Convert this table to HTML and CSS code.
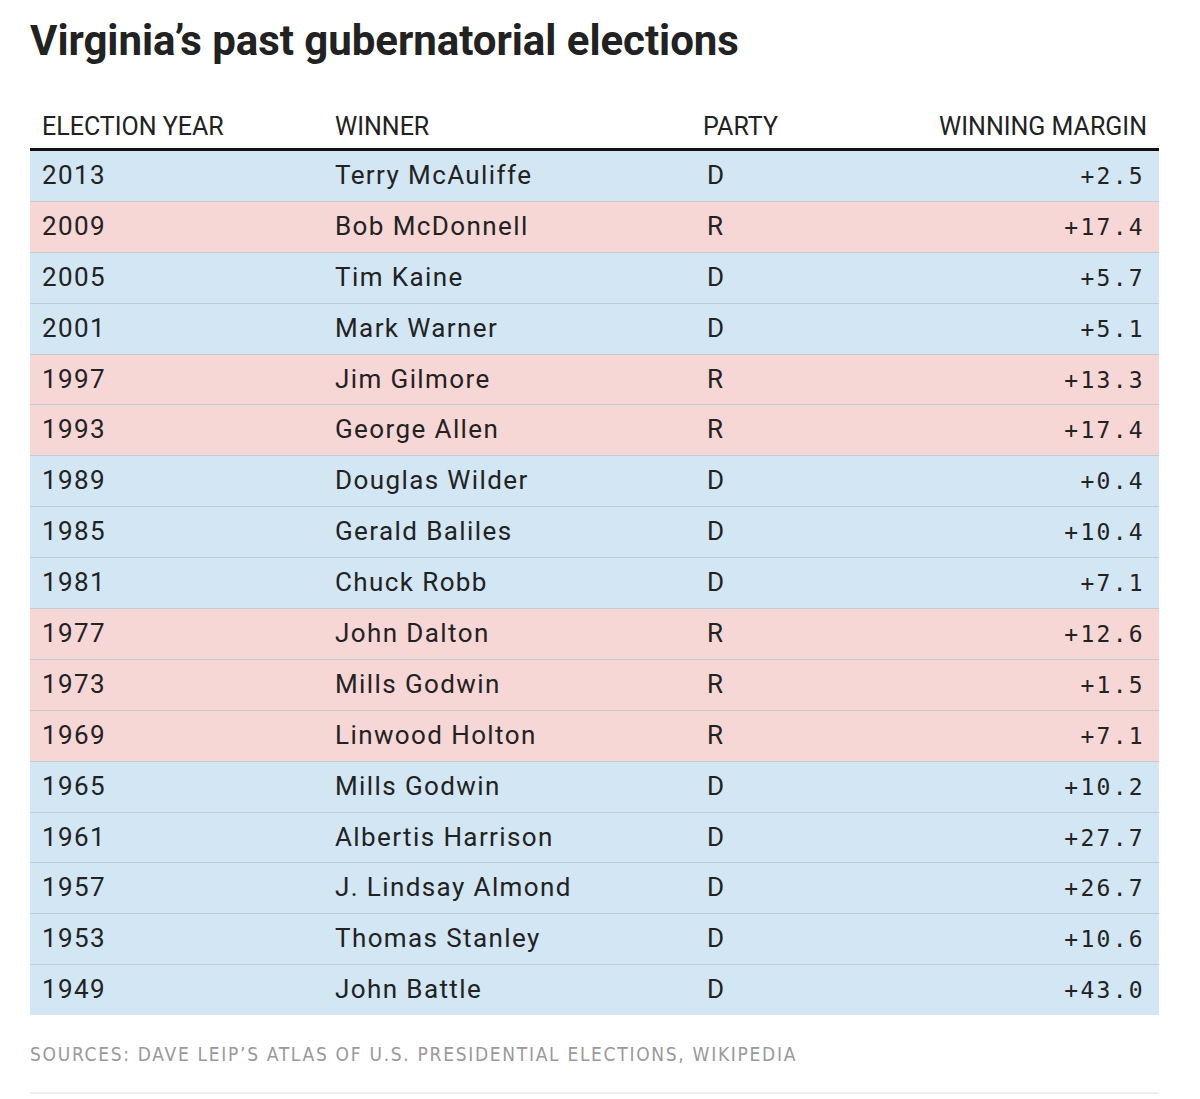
FILE: index.html
```html
<!DOCTYPE html>
<html lang="en">
<head>
<meta charset="utf-8">
<title>Virginia’s past gubernatorial elections</title>
<link rel="stylesheet" href="styles.css">
</head>
<body>
<main class="chart">
  <h1 class="title">Virginia’s past gubernatorial elections</h1>
  <div class="table">
    <div class="row head">
      <div class="c year">Election year</div>
      <div class="c winner">Winner</div>
      <div class="c party">Party</div>
      <div class="c margin">Winning margin</div>
    </div>
    <div class="row dem"><div class="c year">2013</div><div class="c winner">Terry McAuliffe</div><div class="c party">D</div><div class="c num">+2.5</div></div>
    <div class="row rep"><div class="c year">2009</div><div class="c winner">Bob McDonnell</div><div class="c party">R</div><div class="c num">+17.4</div></div>
    <div class="row dem"><div class="c year">2005</div><div class="c winner">Tim Kaine</div><div class="c party">D</div><div class="c num">+5.7</div></div>
    <div class="row dem"><div class="c year">2001</div><div class="c winner">Mark Warner</div><div class="c party">D</div><div class="c num">+5.1</div></div>
    <div class="row rep"><div class="c year">1997</div><div class="c winner">Jim Gilmore</div><div class="c party">R</div><div class="c num">+13.3</div></div>
    <div class="row rep"><div class="c year">1993</div><div class="c winner">George Allen</div><div class="c party">R</div><div class="c num">+17.4</div></div>
    <div class="row dem"><div class="c year">1989</div><div class="c winner">Douglas Wilder</div><div class="c party">D</div><div class="c num">+0.4</div></div>
    <div class="row dem"><div class="c year">1985</div><div class="c winner">Gerald Baliles</div><div class="c party">D</div><div class="c num">+10.4</div></div>
    <div class="row dem"><div class="c year">1981</div><div class="c winner">Chuck Robb</div><div class="c party">D</div><div class="c num">+7.1</div></div>
    <div class="row rep"><div class="c year">1977</div><div class="c winner">John Dalton</div><div class="c party">R</div><div class="c num">+12.6</div></div>
    <div class="row rep"><div class="c year">1973</div><div class="c winner">Mills Godwin</div><div class="c party">R</div><div class="c num">+1.5</div></div>
    <div class="row rep"><div class="c year">1969</div><div class="c winner">Linwood Holton</div><div class="c party">R</div><div class="c num">+7.1</div></div>
    <div class="row dem"><div class="c year">1965</div><div class="c winner">Mills Godwin</div><div class="c party">D</div><div class="c num">+10.2</div></div>
    <div class="row dem"><div class="c year">1961</div><div class="c winner">Albertis Harrison</div><div class="c party">D</div><div class="c num">+27.7</div></div>
    <div class="row dem"><div class="c year">1957</div><div class="c winner">J. Lindsay Almond</div><div class="c party">D</div><div class="c num">+26.7</div></div>
    <div class="row dem"><div class="c year">1953</div><div class="c winner">Thomas Stanley</div><div class="c party">D</div><div class="c num">+10.6</div></div>
    <div class="row dem last"><div class="c year">1949</div><div class="c winner">John Battle</div><div class="c party">D</div><div class="c num">+43.0</div></div>
  </div>
  <p class="sources">Sources: Dave Leip’s Atlas of U.S. Presidential Elections, Wikipedia</p>
  <div class="rule"></div>
</main>
</body>
</html>
```

FILE: styles.css
```css
html, body {
  margin: 0;
  padding: 0;
  background: #ffffff;
}

body {
  font-family: Roboto, "Liberation Sans", Arial, sans-serif;
  color: #222222;
}

.chart {
  width: 1129px;
  padding: 17px 0 0 30px;
}

.title {
  margin: 0;
  font-size: 42px;
  line-height: 48px;
  font-weight: 700;
  color: #222222;
  letter-spacing: -0.05px;
}

.table {
  margin-top: 47px;
}

.row {
  display: grid;
  grid-template-columns: 293px 370px 150px 1fr;
  align-items: baseline;
  box-sizing: border-box;
  height: 50.9px;
  padding-top: 9px;
  border-bottom: 1px solid #c3cbd1;
}

.row.head {
  height: 39px;
  padding-top: 0;
  border-bottom: 3px solid #111111;
}

.row.head .c {
  font-size: 25px;
  line-height: 30px;
  letter-spacing: 0;
  text-transform: uppercase;
  color: #222222;
}

.row.head .party {
  padding-left: 10px;
}

.row.last {
  border-bottom: none;
  height: 49.9px;
}

.dem {
  background: #d3e6f4;
}

.rep {
  background: #f7d6d6;
}

.c {
  padding: 0 12px;
  font-size: 26px;
  line-height: 30px;
  letter-spacing: 1.4px;
  white-space: nowrap;
}

.party {
  padding-left: 14px;
}

.margin {
  text-align: right;
}

.num {
  text-align: right;
  font-family: "DejaVu Sans Mono", "Liberation Mono", monospace;
  font-size: 23px;
  letter-spacing: 2.3px;
  padding-right: 14px;
  color: #222222;
}

.sources {
  margin: 28px 0 0 0;
  font-family: "DejaVu Sans Condensed", "DejaVu Sans", sans-serif;
  font-stretch: condensed;
  font-size: 19px;
  line-height: 22px;
  letter-spacing: 1.7px;
  text-transform: uppercase;
  color: #999999;
}

.rule {
  margin-top: 27px;
  height: 2px;
  background: #eeeeee;
}
```
